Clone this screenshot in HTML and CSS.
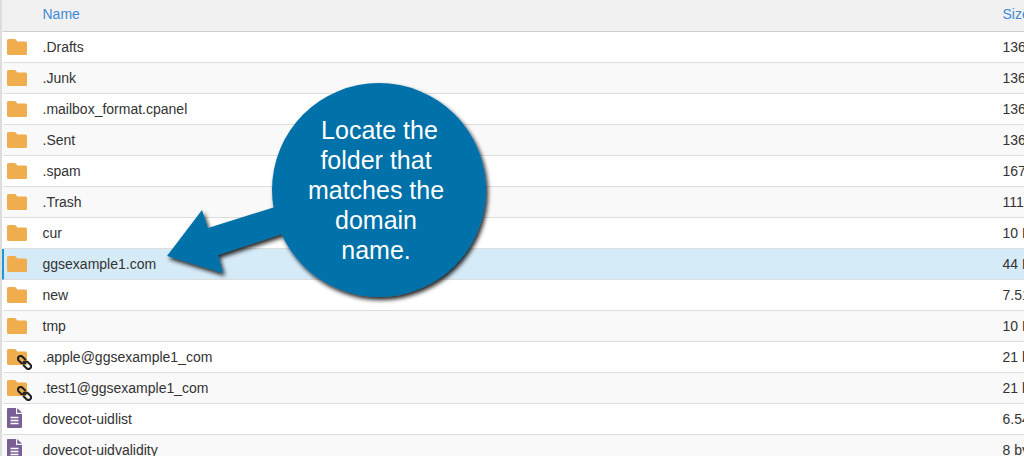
FILE: index.html
```html
<!DOCTYPE html>
<html lang="en">
<head>
<meta charset="utf-8">
<title>File Manager</title>
<link rel="stylesheet" href="styles.css">
</head>
<body>
<svg class="defs" width="0" height="0" aria-hidden="true">
  <defs>
    <symbol id="folder" viewBox="0 0 20 16">
      <path d="M1.5 0H7.5Q8.6 0 9.2 .9L10.2 2.4H18.5Q20 2.4 20 3.9V14.5Q20 16 18.5 16H1.5Q0 16 0 14.5V1.5Q0 0 1.5 0Z" fill="#f0ad4e"/>
    </symbol>
    <symbol id="link" viewBox="0 0 15 15">
      <g fill="none" stroke="#222" stroke-width="2.1" stroke-linecap="round">
        <path d="M8.24 8.24 4.56 8.24 1.76 5.44A2.6 2.6 0 0 1 5.44 1.76L8.24 4.56"/>
        <path d="M6.76 6.76 10.44 6.76 13.24 9.56A2.6 2.6 0 0 1 9.56 13.24L6.76 10.44"/>
      </g>
    </symbol>
    <symbol id="doc" viewBox="0 0 15 20">
      <path d="M1 0H9V6H15V19Q15 20 14 20H1Q0 20 0 19V1Q0 0 1 0Z" fill="#7a5f95"/>
      <path d="M10.2 0 15 4.8H10.2Z" fill="#7a5f95"/>
      <path d="M3.5 9.5H11.5M3.5 12.5H11.5M3.5 15.5H11.5" stroke="#fff" stroke-width="1.4" fill="none"/>
    </symbol>
  </defs>
</svg>
<main class="files">
  <div class="row head"><span class="icon"></span><span class="name">Name</span><span class="size">Size</span></div>
  <div class="row"><span class="icon"><svg class="ic-folder"><use href="#folder"/></svg></span><span class="name">.Drafts</span><span class="size">136 bytes</span></div>
  <div class="row"><span class="icon"><svg class="ic-folder"><use href="#folder"/></svg></span><span class="name">.Junk</span><span class="size">136 bytes</span></div>
  <div class="row"><span class="icon"><svg class="ic-folder"><use href="#folder"/></svg></span><span class="name">.mailbox_format.cpanel</span><span class="size">136 bytes</span></div>
  <div class="row"><span class="icon"><svg class="ic-folder"><use href="#folder"/></svg></span><span class="name">.Sent</span><span class="size">136 bytes</span></div>
  <div class="row"><span class="icon"><svg class="ic-folder"><use href="#folder"/></svg></span><span class="name">.spam</span><span class="size">167 bytes</span></div>
  <div class="row"><span class="icon"><svg class="ic-folder"><use href="#folder"/></svg></span><span class="name">.Trash</span><span class="size">111 bytes</span></div>
  <div class="row"><span class="icon"><svg class="ic-folder"><use href="#folder"/></svg></span><span class="name">cur</span><span class="size">10 KB</span></div>
  <div class="row selected"><span class="icon"><svg class="ic-folder"><use href="#folder"/></svg></span><span class="name">ggsexample1.com</span><span class="size">44 KB</span></div>
  <div class="row"><span class="icon"><svg class="ic-folder"><use href="#folder"/></svg></span><span class="name">new</span><span class="size">7.51 KB</span></div>
  <div class="row"><span class="icon"><svg class="ic-folder"><use href="#folder"/></svg></span><span class="name">tmp</span><span class="size">10 KB</span></div>
  <div class="row"><span class="icon"><svg class="ic-folder"><use href="#folder"/></svg><svg class="ic-link"><use href="#link"/></svg></span><span class="name">.apple@ggsexample1_com</span><span class="size">21 bytes</span></div>
  <div class="row"><span class="icon"><svg class="ic-folder"><use href="#folder"/></svg><svg class="ic-link"><use href="#link"/></svg></span><span class="name">.test1@ggsexample1_com</span><span class="size">21 bytes</span></div>
  <div class="row"><span class="icon"><svg class="ic-doc"><use href="#doc"/></svg></span><span class="name">dovecot-uidlist</span><span class="size">6.54 KB</span></div>
  <div class="row"><span class="icon"><svg class="ic-doc"><use href="#doc"/></svg></span><span class="name">dovecot-uidvalidity</span><span class="size">8 bytes</span></div>
</main>
<aside class="callout">
  <svg class="callout-shape" viewBox="0 0 340 230" width="340" height="230" aria-hidden="true">
    <defs>
      <filter id="drop" x="-10%" y="-10%" width="125%" height="125%">
        <feDropShadow dx="2" dy="3" stdDeviation="2.2" flood-color="#000" flood-opacity=".85"/>
      </filter>
    </defs>
    <g filter="url(#drop)" fill="#0071a9">
      <path d="M7 176 42 130 48 148 115 127 125 153 58 175 63 193Z"/>
      <circle cx="219" cy="110" r="107"/>
    </g>
  </svg>
  <p class="callout-text"><span class="first-line">Locate the</span><br>folder that<br>matches the<br>domain<br>name.</p>
</aside>
</body>
</html>
```
FILE: styles.css
```css
html, body {
  margin: 0;
  padding: 0;
  height: 456px;
  overflow: hidden;
  background: #fff;
}
body {
  position: relative;
  font-family: "Liberation Sans", Arial, sans-serif;
  font-size: 14px;
  color: #333;
}
.defs {
  position: absolute;
}
.files {
  width: 1200px;
  border-left: 2px solid #ddd;
}
.row {
  display: flex;
  align-items: center;
  height: 30px;
  border-bottom: 1px solid #ddd;
  border-left: 2px solid transparent;
  background: #fff;
}
.row:nth-child(odd) {
  background: #f9f9f9;
}
.row.head {
  height: 31px;
  background: #f1f1f1;
  border-bottom-color: #ccc;
  color: #3f8ad6;
}
.row.head .name, .row.head .size {
  position: relative;
  top: -2px;
}
.row.selected {
  background: #d6ebf8;
  border-left-color: #1b9ad2;
}
.icon {
  position: relative;
  flex: 0 0 38.5px;
  height: 30px;
}
.name {
  flex: 0 0 960px;
}
.size {
  flex: 1;
}
.ic-folder {
  position: absolute;
  left: 3px;
  top: 7px;
  width: 20px;
  height: 16px;
}
.ic-link {
  position: absolute;
  left: 13px;
  top: 13px;
  width: 15px;
  height: 15px;
}
.ic-doc {
  position: absolute;
  left: 3px;
  top: 4px;
  width: 15px;
  height: 20px;
}
.callout {
  position: absolute;
  left: 160px;
  top: 80px;
  width: 340px;
  height: 230px;
}
.callout-shape {
  display: block;
}
.callout-text {
  position: absolute;
  left: 136px;
  top: 35px;
  width: 160px;
  margin: 0;
  font-size: 25px;
  line-height: 30px;
  text-align: center;
  color: #fff;
}
.first-line {
  margin-left: 7px;
}
```
